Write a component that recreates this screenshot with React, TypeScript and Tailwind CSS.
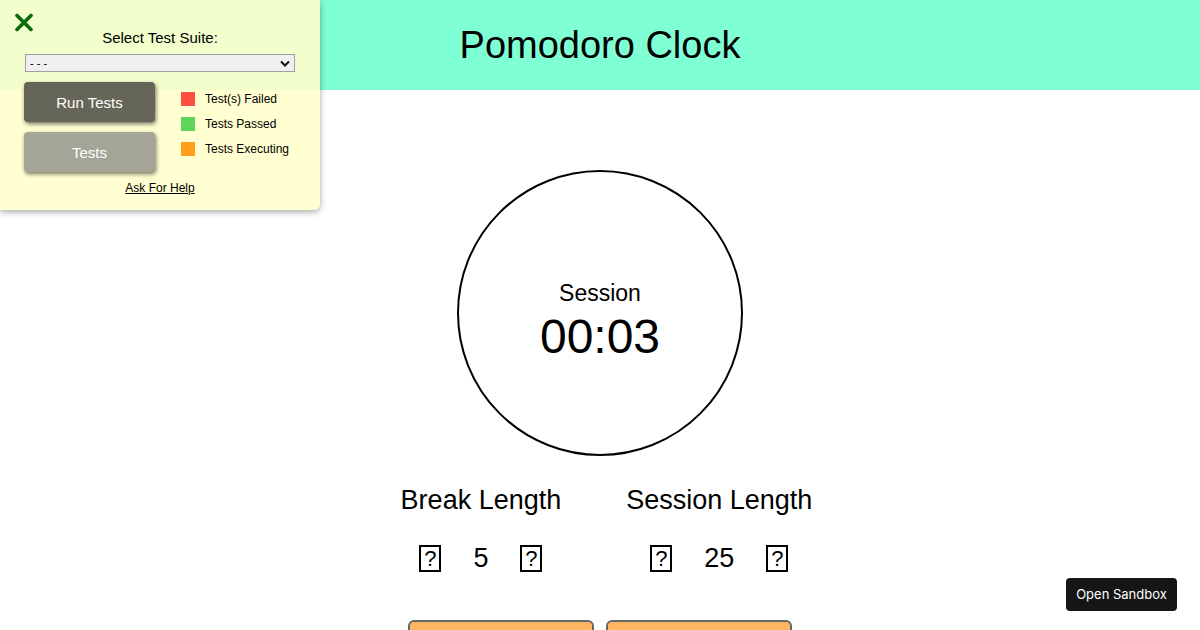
import React from 'react'

const font = { fontFamily: '"Liberation Sans", Arial, sans-serif' }

// stands in for the missing arrow glyph (browser tofu box)
function Tofu() {
  return (
    <span className="inline-flex items-center justify-center w-[22px] h-[27px] border-2 border-black text-[22px] leading-none text-black">
      ?
    </span>
  )
}

function Length({ label, value }: { label: string; value: number }) {
  return (
    <div className="flex flex-col items-center">
      <div className="text-[27px] leading-none h-[30px] flex items-center">{label}</div>
      <div className="flex items-center gap-[32px] mt-[30px]">
        <Tofu />
        <span className="text-[27px] leading-none">{value}</span>
        <Tofu />
      </div>
    </div>
  )
}

function TestPanel() {
  return (
    <div className="absolute left-0 top-0 w-[320px] h-[210px] bg-[#ffffcc]/90 rounded-br-[6px] shadow-[0_2px_6px_rgba(0,0,0,0.35)] text-black">
      <svg className="absolute left-[14px] top-[13px]" width="20" height="19" viewBox="0 0 20 19">
        <path d="M3 2.5 L17 16.5 M17 2.5 L3 16.5" stroke="#0a6b0a" strokeWidth="3.6" strokeLinecap="round" />
      </svg>
      <div className="pt-[28px] text-center text-[15px] leading-[20px]">Select Test Suite:</div>
      <div className="mx-[25px] mt-[6px] h-[18px] bg-[#efefef] border border-[#a0a0a0] flex items-center justify-between px-[4px]">
        <span className="text-[11px] leading-none">- - -</span>
        <svg width="10" height="7" viewBox="0 0 10 7">
          <path d="M1 1.5 L5 5.5 L9 1.5" fill="none" stroke="#111" strokeWidth="2" />
        </svg>
      </div>
      <div className="flex mt-[10px] pl-[24px]">
        <div className="flex flex-col gap-[10px]">
          <div className="w-[131px] h-[40px] rounded-[4px] bg-[#666658] text-white text-[15px] flex items-center justify-center pt-[2px] shadow-[1px_2px_4px_rgba(0,0,0,0.55)]">
            Run Tests
          </div>
          <div className="w-[131px] h-[40px] rounded-[4px] bg-[#a5a597] text-white text-[15px] flex items-center justify-center pt-[2px] shadow-[1px_2px_4px_rgba(0,0,0,0.55)]">
            Tests
          </div>
        </div>
        <div className="ml-[26px] mt-[10px] flex flex-col gap-[11px] text-[12px] leading-[14px]">
          <div className="flex items-center gap-[10px]">
            <span className="w-[14px] h-[14px] bg-[#ff4f42]" />
            Test(s) Failed
          </div>
          <div className="flex items-center gap-[10px]">
            <span className="w-[14px] h-[14px] bg-[#5fd35a]" />
            Tests Passed
          </div>
          <div className="flex items-center gap-[10px]">
            <span className="w-[14px] h-[14px] bg-[#ff9f1a]" />
            Tests Executing
          </div>
        </div>
      </div>
      <div className="mt-[9px] text-center text-[12px] underline leading-[14px]">Ask For Help</div>
    </div>
  )
}

export default function App() {
  return (
    <div className="relative w-[1200px] h-[630px] overflow-hidden bg-white text-black" style={font}>
      <header className="h-[90px] bg-[#7fffd4] flex items-center justify-center">
        <h1 className="text-[38px] leading-none">Pomodoro Clock</h1>
      </header>

      <div className="flex justify-center mt-[80px]">
        <div className="w-[286px] h-[286px] rounded-full border-2 border-black flex flex-col items-center justify-center pt-[16px]">
          <div className="text-[23px] leading-none mb-[8px]">Session</div>
          <div className="text-[48px] leading-none">00:03</div>
        </div>
      </div>

      <div className="flex justify-center gap-[65px] mt-[29px] pl-[13px]">
        <Length label="Break Length" value={5} />
        <Length label="Session Length" value={25} />
      </div>

      <div className="flex justify-center gap-[12px] mt-[48px]">
        <div className="w-[186px] h-[40px] rounded-[6px] bg-[#ffb562] border-2 border-[#666]" />
        <div className="w-[186px] h-[40px] rounded-[6px] bg-[#ffb562] border-2 border-[#666]" />
      </div>

      <TestPanel />

      <div className="absolute left-[1066px] top-[578px] w-[111px] h-[33px] rounded-[4px] bg-[#151515] text-white text-[13px] flex items-center justify-center" style={{ fontFamily: 'Inter, "Liberation Sans", sans-serif' }}>
        Open Sandbox
      </div>
    </div>
  )
}
